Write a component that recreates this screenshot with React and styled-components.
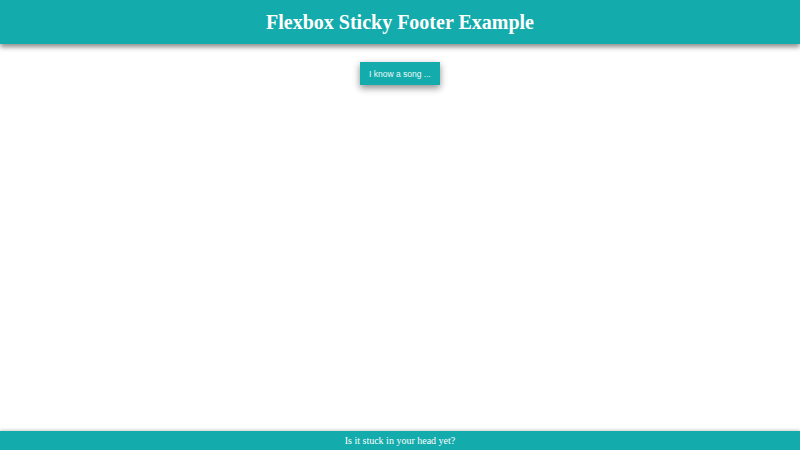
import React from 'react';
import styled, { createGlobalStyle } from 'styled-components';

const GlobalStyle = createGlobalStyle`
  html, body {
    margin: 0;
    padding: 0;
    background: #fff;
  }
`;

const Page = styled.div`
  display: flex;
  flex-direction: column;
  min-height: 100vh;
  font-family: "Liberation Serif", "Times New Roman", serif;
`;

const Header = styled.header`
  background: #13abab;
  height: 44px;
  display: flex;
  align-items: center;
  justify-content: center;
  box-shadow: 0 3px 5px rgba(0, 0, 0, 0.45);
  position: relative;
  z-index: 1;
`;

const Title = styled.h1`
  margin: 0;
  color: #fff;
  font-size: 20px;
  font-weight: bold;
`;

const Main = styled.main`
  flex: 1;
  display: flex;
  justify-content: center;
  align-items: flex-start;
  padding-top: 18px;
`;

const SongButton = styled.button`
  background: #13abab;
  color: #eefafa;
  border: none;
  width: 80px;
  height: 23px;
  padding: 0;
  font-family: "Liberation Sans", Arial, sans-serif;
  font-size: 8.5px;
  box-shadow: 0 3px 7px rgba(0, 0, 0, 0.45);
  cursor: pointer;
`;

const Footer = styled.footer`
  background: #13abab;
  height: 19px;
  display: flex;
  align-items: center;
  justify-content: center;
  color: #fff;
  font-size: 10px;
  box-shadow: 0 -1px 3px rgba(0, 0, 0, 0.2);
`;

export default function App() {
  return (
    <>
      <GlobalStyle />
      <Page>
        <Header>
          <Title>Flexbox Sticky Footer Example</Title>
        </Header>
        <Main>
          <SongButton>I know a song ...</SongButton>
        </Main>
        <Footer>Is it stuck in your head yet?</Footer>
      </Page>
    </>
  );
}
